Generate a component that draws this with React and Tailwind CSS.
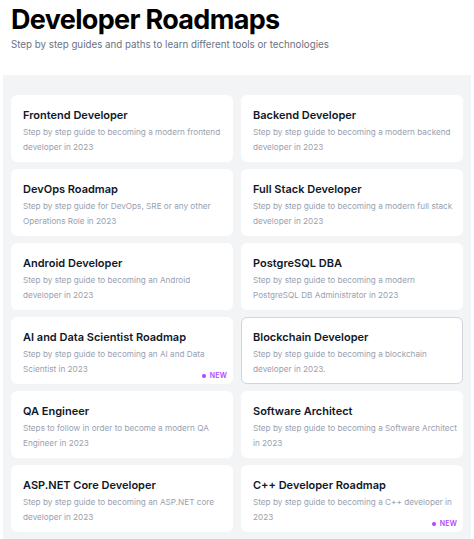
import React from 'react';

const roadmaps = [
  { title: 'Frontend Developer', desc: 'Step by step guide to becoming a modern frontend developer in 2023' },
  { title: 'Backend Developer', desc: 'Step by step guide to becoming a modern backend developer in 2023' },
  { title: 'DevOps Roadmap', desc: 'Step by step guide for DevOps, SRE or any other Operations Role in 2023' },
  { title: 'Full Stack Developer', desc: 'Step by step guide to becoming a modern full stack developer in 2023' },
  { title: 'Android Developer', desc: 'Step by step guide to becoming an Android developer in 2023' },
  { title: 'PostgreSQL DBA', desc: 'Step by step guide to becoming a modern PostgreSQL DB Administrator in 2023' },
  { title: 'AI and Data Scientist Roadmap', desc: 'Step by step guide to becoming an AI and Data Scientist in 2023', isNew: true },
  { title: 'Blockchain Developer', desc: 'Step by step guide to becoming a blockchain developer in 2023.', active: true },
  { title: 'QA Engineer', desc: 'Steps to follow in order to become a modern QA Engineer in 2023' },
  { title: 'Software Architect', desc: 'Step by step guide to becoming a Software Architect in 2023' },
  { title: 'ASP.NET Core Developer', desc: 'Step by step guide to becoming an ASP.NET core developer in 2023' },
  { title: 'C++ Developer Roadmap', desc: 'Step by step guide to becoming a C++ developer in 2023', isNew: true },
];

const RoadmapCard = ({ item }) => (
  <a
    href="#"
    className={`relative flex h-[67px] flex-col rounded-md bg-white pl-[11px] pr-[3px] pt-[9px] ${
      item.active ? 'border border-gray-300' : 'border border-transparent'
    }`}
  >
    <span className="text-[11px] font-semibold leading-[20px] text-gray-900">{item.title}</span>
    <span className="text-[8.2px] leading-[15px] text-gray-400">{item.desc}</span>
    {item.isNew && (
      <span className="absolute bottom-[2px] right-[5px] flex items-center gap-[4px] text-[7px] font-semibold tracking-wide text-purple-500">
        <span className="size-[4px] rounded-full bg-purple-500" />
        NEW
      </span>
    )}
  </a>
);

export default function App() {
  return (
    <div className="min-h-[539px] bg-white" style={{ fontFamily: 'Inter, "Noto Sans", sans-serif' }}>
      <div className="px-[11px] pt-[2px]">
        <h1 className="text-[27px] font-bold leading-[36px] tracking-tight text-black">Developer Roadmaps</h1>
        <p className="text-[9.75px] leading-[14px] text-gray-500">
          Step by step guides and paths to learn different tools or technologies
        </p>
      </div>
      <div className="ml-[3px] mr-[3px] mt-[23px] bg-gray-100 px-[8px] pt-[20px] pb-[8px]">
        <div className="grid grid-cols-2 gap-x-[8px] gap-y-[7px]">
          {roadmaps.map((item) => (
            <RoadmapCard key={item.title} item={item} />
          ))}
        </div>
      </div>
    </div>
  );
}
